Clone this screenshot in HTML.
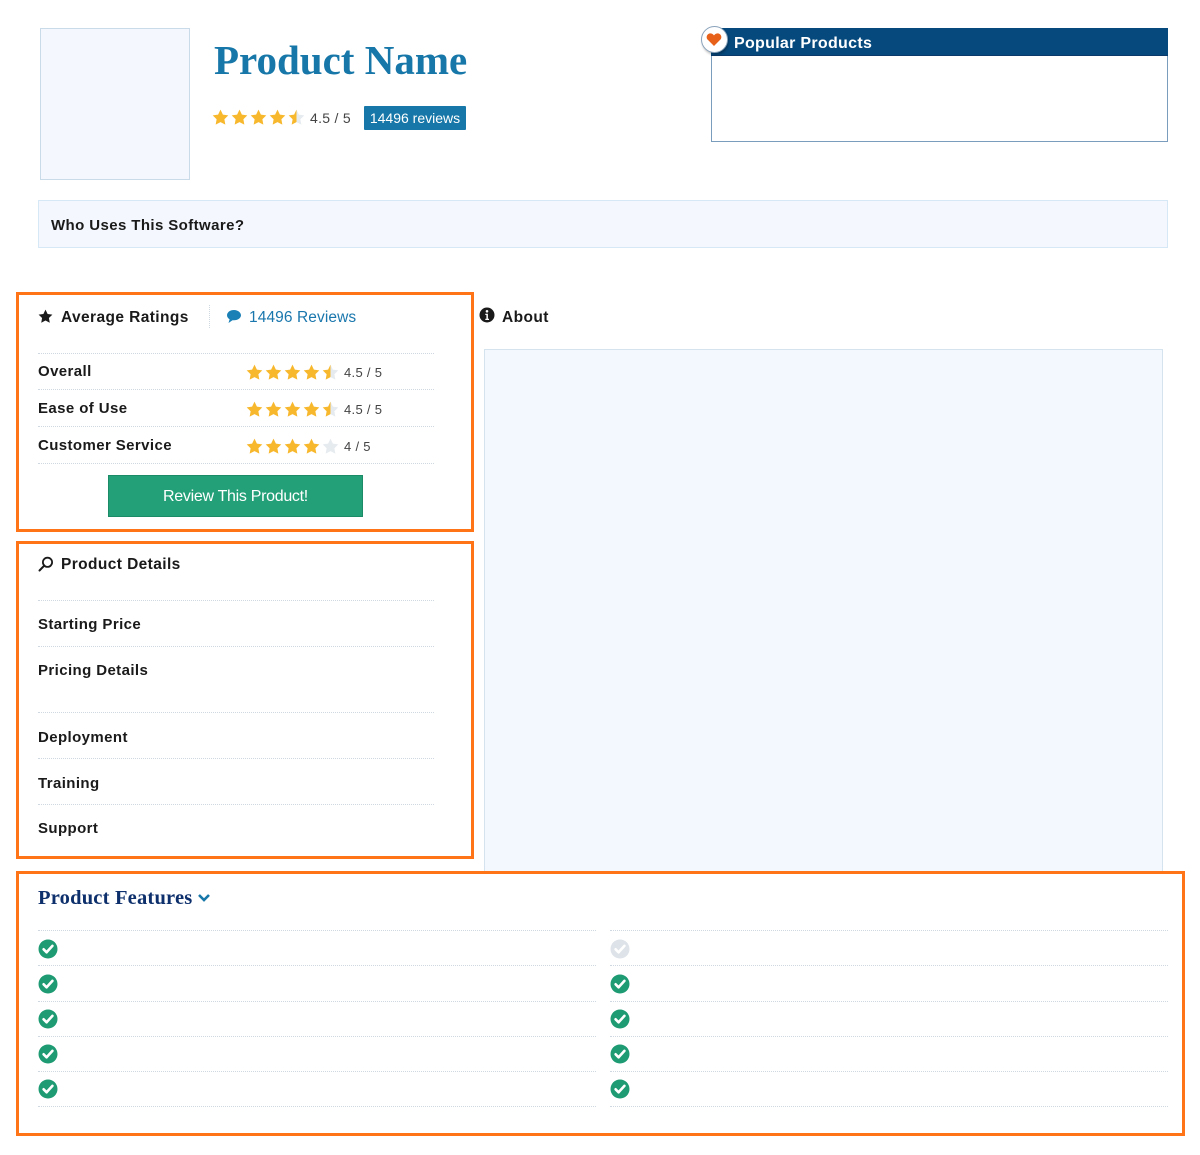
<!DOCTYPE html>
<html><head><meta charset="utf-8">
<style>
*{margin:0;padding:0;box-sizing:border-box}
body{width:1200px;height:1155px;background:#fff;position:relative;font-family:"Liberation Sans",sans-serif;color:#1d1d1d;overflow:hidden}
.a{position:absolute}
.lbl{position:absolute;font-weight:bold;font-size:15px;letter-spacing:.4px;line-height:20px;color:#1a1a1a;margin-top:2px}
.hl{position:absolute;height:0;border-top:1px dotted #cfd8e0}
.ob{position:absolute;border:3px solid #ff7417}
.stars{position:absolute;display:flex;gap:2px;align-items:center}
.num{font-size:13px;color:#444;margin-left:3px;letter-spacing:.3px}
.chk{position:absolute;width:20px;height:20px}
</style></head><body>
<svg width="0" height="0" style="position:absolute">
<defs>
<linearGradient id="half"><stop offset="50%" stop-color="#f7b82d"/><stop offset="50%" stop-color="#e6ebf0"/></linearGradient>
<symbol id="st" viewBox="0 0 16 16"><path d="M8 .6l2.25 4.7 5.1.7-3.7 3.6.9 5.1L8 12.3l-4.55 2.4.9-5.1L.65 6l5.1-.7z"/></symbol>
<symbol id="ck" viewBox="0 0 20 20"><circle cx="10" cy="10" r="9.5"/><path d="M5.6 10.3l3 3 5.8-6.4" fill="none" stroke="#fff" stroke-width="2.6" stroke-linecap="round" stroke-linejoin="round"/></symbol>
</defs></svg>

<div class="a" style="left:40px;top:28px;width:150px;height:152px;background:#f4f8fe;border:1px solid #c9dbe9"></div>
<div class="a" style="left:214px;top:35px;font-family:'Liberation Serif',serif;font-weight:bold;font-size:41px;color:#1677a8;line-height:50px">Product Name</div>
<div class="stars" style="left:212px;top:109px">
<svg width="17" height="17" fill="#f7b82d"><use href="#st"/></svg><svg width="17" height="17" fill="#f7b82d"><use href="#st"/></svg><svg width="17" height="17" fill="#f7b82d"><use href="#st"/></svg><svg width="17" height="17" fill="#f7b82d"><use href="#st"/></svg><svg width="17" height="17" fill="url(#half)"><use href="#st"/></svg>
<span class="num" style="font-size:14px">4.5 / 5</span></div>
<div class="a" style="left:364px;top:106px;width:102px;height:24px;background:#1677a8;color:#fff;font-size:14px;line-height:24px;text-align:center;border-radius:1px">14496 reviews</div>

<div class="a" style="left:711px;top:28px;width:457px;height:114px;border:1px solid #7b9dbd;background:#fff"></div>
<div class="a" style="left:711px;top:28px;width:457px;height:28px;background:#06497d;border-bottom:1px solid #0b3a6a"></div>
<div class="a" style="left:734px;top:33px;color:#fff;font-weight:bold;font-size:16px;line-height:22px;letter-spacing:.3px">Popular Products</div>
<div class="a" style="left:701px;top:26px;width:27px;height:27px;border-radius:50%;background:#fff;border:1px solid #8aa3bb;box-shadow:1px 2px 2px rgba(0,0,0,.25)"></div>
<svg class="a" style="left:706px;top:32px" width="16" height="15" viewBox="0 0 16 15"><path d="M8 14L1.8 7.8C.2 6.2.3 3.6 2 2.2 3.6.9 6 1.1 7.4 2.7L8 3.4l.6-.7C10 1.1 12.4.9 14 2.2c1.7 1.4 1.8 4 .2 5.6z" fill="#e8611a"/></svg>

<div class="a" style="left:38px;top:200px;width:1130px;height:48px;background:#f4f8fe;border:1px solid #d6e8f5"></div>
<div class="lbl" style="left:51px;top:214px">Who Uses This Software?</div>

<div class="ob" style="left:16px;top:292px;width:458px;height:240px"></div>
<svg class="a" style="left:38px;top:309px" width="15" height="15" fill="#1a1a1a"><use href="#st"/></svg>
<div class="lbl" style="left:61px;top:306px;font-size:15.5px">Average Ratings</div>
<div class="a" style="left:209px;top:305px;height:23px;border-left:1px dotted #cfd8e0"></div>
<svg class="a" style="left:226px;top:309px" width="16" height="15" viewBox="0 0 16 15"><path d="M8 1C4 1 1 3.4 1 6.3c0 1.7 1 3.1 2.6 4L2.5 14l4-2.8c.5.1 1 .1 1.5.1 4 0 7-2.4 7-5S12 1 8 1z" fill="#1a80b6"/></svg>
<div class="a" style="left:249px;top:308px;font-size:15.5px;color:#1a77ad;line-height:20px;letter-spacing:.1px">14496 Reviews</div>
<div class="hl" style="left:38px;top:353px;width:396px"></div>
<div class="hl" style="left:38px;top:389px;width:396px"></div>
<div class="hl" style="left:38px;top:426px;width:396px"></div>
<div class="hl" style="left:38px;top:463px;width:396px"></div>
<div class="lbl" style="left:38px;top:360px">Overall</div>
<div class="lbl" style="left:38px;top:397px">Ease of Use</div>
<div class="lbl" style="left:38px;top:434px">Customer Service</div>
<div class="stars" style="left:246px;top:364px"><svg width="17" height="17" fill="#f7b82d"><use href="#st"/></svg><svg width="17" height="17" fill="#f7b82d"><use href="#st"/></svg><svg width="17" height="17" fill="#f7b82d"><use href="#st"/></svg><svg width="17" height="17" fill="#f7b82d"><use href="#st"/></svg><svg width="17" height="17" fill="url(#half)"><use href="#st"/></svg><span class="num">4.5 / 5</span></div>
<div class="stars" style="left:246px;top:401px"><svg width="17" height="17" fill="#f7b82d"><use href="#st"/></svg><svg width="17" height="17" fill="#f7b82d"><use href="#st"/></svg><svg width="17" height="17" fill="#f7b82d"><use href="#st"/></svg><svg width="17" height="17" fill="#f7b82d"><use href="#st"/></svg><svg width="17" height="17" fill="url(#half)"><use href="#st"/></svg><span class="num">4.5 / 5</span></div>
<div class="stars" style="left:246px;top:438px"><svg width="17" height="17" fill="#f7b82d"><use href="#st"/></svg><svg width="17" height="17" fill="#f7b82d"><use href="#st"/></svg><svg width="17" height="17" fill="#f7b82d"><use href="#st"/></svg><svg width="17" height="17" fill="#f7b82d"><use href="#st"/></svg><svg width="17" height="17" fill="#e6ebf0"><use href="#st"/></svg><span class="num">4 / 5</span></div>
<div class="a" style="left:108px;top:475px;width:255px;height:42px;background:#24a078;border:1px solid #1b8a66;color:#fff;font-size:16px;line-height:41px;text-align:center;letter-spacing:-.3px">Review This Product!</div>

<div class="ob" style="left:16px;top:541px;width:458px;height:318px"></div>
<svg class="a" style="left:38px;top:556px" width="16" height="16" viewBox="0 0 16 16"><circle cx="9.5" cy="6.3" r="4.6" fill="none" stroke="#1a1a1a" stroke-width="1.8"/><path d="M6.3 9.6L1.5 14.5" stroke="#1a1a1a" stroke-width="2" stroke-linecap="round"/></svg>
<div class="lbl" style="left:61px;top:553px;font-size:15.5px">Product Details</div>
<div class="hl" style="left:38px;top:600px;width:396px"></div>
<div class="hl" style="left:38px;top:646px;width:396px"></div>
<div class="hl" style="left:38px;top:712px;width:396px"></div>
<div class="hl" style="left:38px;top:758px;width:396px"></div>
<div class="hl" style="left:38px;top:804px;width:396px"></div>
<div class="lbl" style="left:38px;top:613px">Starting Price</div>
<div class="lbl" style="left:38px;top:659px">Pricing Details</div>
<div class="lbl" style="left:38px;top:726px">Deployment</div>
<div class="lbl" style="left:38px;top:772px">Training</div>
<div class="lbl" style="left:38px;top:817px">Support</div>

<svg class="a" style="left:479px;top:307px" width="16" height="16" viewBox="0 0 16 16"><circle cx="8" cy="8" r="7.5" fill="#1a1a1a"/><circle cx="8" cy="4.3" r="1.3" fill="#fff"/><path d="M6.3 6.8h2.6v5H10v1.2H6.3v-1.2h1.1V8H6.3z" fill="#fff"/></svg>
<div class="lbl" style="left:502px;top:306px;font-size:15.5px">About</div>
<div class="a" style="left:484px;top:349px;width:679px;height:530px;background:#f3f8fe;border:1px solid #d5e3ee"></div>

<div class="ob" style="left:16px;top:871px;width:1169px;height:265px;background:#fff"></div>
<div class="a" style="left:38px;top:885px;font-family:'Liberation Serif',serif;font-size:20.5px;color:#0d2f6b;line-height:26px;font-weight:bold;letter-spacing:.2px">Product Features</div>
<svg class="a" style="left:197px;top:893px" width="14" height="10" viewBox="0 0 14 10"><path d="M2 2l5 5 5-5" fill="none" stroke="#1677a8" stroke-width="2.6"/></svg>
<div class="hl" style="left:38px;top:930px;width:558px"></div>
<div class="hl" style="left:38px;top:965px;width:558px"></div>
<div class="hl" style="left:38px;top:1001px;width:558px"></div>
<div class="hl" style="left:38px;top:1036px;width:558px"></div>
<div class="hl" style="left:38px;top:1071px;width:558px"></div>
<div class="hl" style="left:38px;top:1106px;width:558px"></div>
<div class="hl" style="left:610px;top:930px;width:558px"></div>
<div class="hl" style="left:610px;top:965px;width:558px"></div>
<div class="hl" style="left:610px;top:1001px;width:558px"></div>
<div class="hl" style="left:610px;top:1036px;width:558px"></div>
<div class="hl" style="left:610px;top:1071px;width:558px"></div>
<div class="hl" style="left:610px;top:1106px;width:558px"></div>
<svg class="chk" style="left:38px;top:939px" fill="#1f9b73"><use href="#ck"/></svg>
<svg class="chk" style="left:38px;top:974px" fill="#1f9b73"><use href="#ck"/></svg>
<svg class="chk" style="left:38px;top:1009px" fill="#1f9b73"><use href="#ck"/></svg>
<svg class="chk" style="left:38px;top:1044px" fill="#1f9b73"><use href="#ck"/></svg>
<svg class="chk" style="left:38px;top:1079px" fill="#1f9b73"><use href="#ck"/></svg>
<svg class="chk" style="left:610px;top:939px" fill="#dde3e8"><use href="#ck"/></svg>
<svg class="chk" style="left:610px;top:974px" fill="#1f9b73"><use href="#ck"/></svg>
<svg class="chk" style="left:610px;top:1009px" fill="#1f9b73"><use href="#ck"/></svg>
<svg class="chk" style="left:610px;top:1044px" fill="#1f9b73"><use href="#ck"/></svg>
<svg class="chk" style="left:610px;top:1079px" fill="#1f9b73"><use href="#ck"/></svg>
</body></html>
